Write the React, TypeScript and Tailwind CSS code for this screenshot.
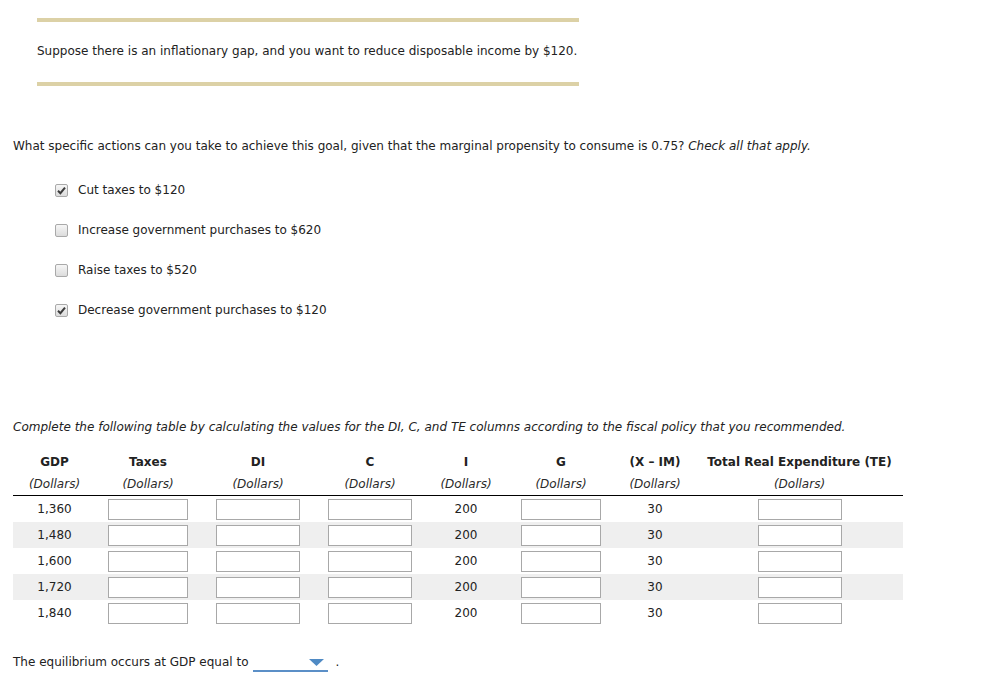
import React from 'react';

const options = [
  { label: 'Cut taxes to $120', checked: true },
  { label: 'Increase government purchases to $620', checked: false },
  { label: 'Raise taxes to $520', checked: false },
  { label: 'Decrease government purchases to $120', checked: true },
];

const columns = [
  { title: 'GDP', w: 'w-[83px]' },
  { title: 'Taxes', w: 'w-[104px]' },
  { title: 'DI', w: 'w-[116px]' },
  { title: 'C', w: 'w-[108px]' },
  { title: 'I', w: 'w-[84px]' },
  { title: 'G', w: 'w-[106px]' },
  { title: '(X – IM)', w: 'w-[82px]' },
  { title: 'Total Real Expenditure (TE)', w: 'w-[207px]' },
];

const rows = ['1,360', '1,480', '1,600', '1,720', '1,840'];

const Checkbox: React.FC<{ checked: boolean }> = ({ checked }) => (
  <span className="w-[13px] h-[13px] rounded-[2px] border border-[#a9a9a9] bg-gradient-to-b from-[#f6f6f6] to-[#dcdcdc] flex items-center justify-center">
    {checked && (
      <svg width="9" height="9" viewBox="0 0 9 9">
        <path d="M1 4.8 L3.4 7.2 L8 1.6" fill="none" stroke="#3c3c3c" strokeWidth="2" />
      </svg>
    )}
  </span>
);

const Box: React.FC<{ w: string }> = ({ w }) => (
  <div className={`${w} h-[21px] border border-[#a8a8a8] bg-white`} />
);

const App: React.FC = () => {
  return (
    <div className="w-[992px] min-h-[693px] bg-white font-['DejaVu_Sans',sans-serif] text-[12px] leading-[16px] text-[#222]">
      {/* Prompt box */}
      <div className="pt-[18px] pl-[37px]">
        <div className="w-[542px] border-y-4 border-[#dcd1a6] pt-[21px] pb-[23px]">
          Suppose there is an inflationary gap, and you want to reduce disposable income by $120.
        </div>
      </div>

      <p className="pl-[13px] mt-[52px]">
        What specific actions can you take to achieve this goal, given that the marginal propensity to consume is 0.75?{' '}
        <i>Check all that apply.</i>
      </p>

      <div className="pl-[55px] mt-[28px] flex flex-col gap-[24px]">
        {options.map((o) => (
          <label key={o.label} className="h-[16px] flex items-center gap-[10px]">
            <Checkbox checked={o.checked} />
            <span>{o.label}</span>
          </label>
        ))}
      </div>

      <p className="pl-[13px] mt-[101px] italic">
        Complete the following table by calculating the values for the DI, C, and TE columns according to the fiscal policy that you recommended.
      </p>

      {/* Table */}
      <div className="ml-[13px] mt-[16px] w-[890px]">
        <div className="flex border-b border-black">
          {columns.map((c) => (
            <div key={c.title} className={`${c.w} flex flex-col items-center`}>
              <div className="h-[22px] flex items-center font-bold">{c.title}</div>
              <div className="h-[22px] flex items-center italic text-[#2a2a2a]">(Dollars)</div>
            </div>
          ))}
        </div>
        {rows.map((gdp, i) => (
          <div key={gdp} className={`flex h-[26px] items-center ${i % 2 === 1 ? 'bg-[#efefef]' : ''}`}>
            <div className="w-[83px] text-center">{gdp}</div>
            <div className="w-[104px] flex justify-center"><Box w="w-[80px]" /></div>
            <div className="w-[116px] flex justify-center"><Box w="w-[84px]" /></div>
            <div className="w-[108px] flex justify-center"><Box w="w-[84px]" /></div>
            <div className="w-[84px] text-center">200</div>
            <div className="w-[106px] flex justify-center"><Box w="w-[80px]" /></div>
            <div className="w-[82px] text-center">30</div>
            <div className="w-[207px] flex justify-center"><Box w="w-[84px]" /></div>
          </div>
        ))}
      </div>

      <div className="pl-[13px] mt-[28px] flex items-start">
        <span>The equilibrium occurs at GDP equal to</span>
        <span className="ml-[4px] w-[75px] h-[18px] border-b-2 border-[#5b8fc7] flex justify-end pr-[4px] pt-[5px]">
          <svg width="15" height="7" viewBox="0 0 15 7">
            <path d="M0 0 H15 L7.5 7 Z" fill="#4f8ac4" />
          </svg>
        </span>
        <span className="ml-[8px]">.</span>
      </div>
    </div>
  );
};

export default App;
